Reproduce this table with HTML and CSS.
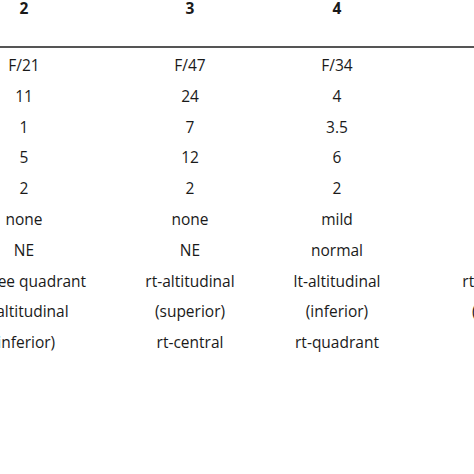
FILE: index.html
```html
<!DOCTYPE html>
<html>
<head>
<meta charset="utf-8">
<link rel="stylesheet" href="styles.css">
</head>
<body>
<table class="data">
  <colgroup>
    <col class="c1"><col class="c2"><col class="c3"><col class="c4">
  </colgroup>
  <thead>
    <tr><th>2</th><th>3</th><th>4</th><th>5</th></tr>
  </thead>
  <tbody>
    <tr class="first"><td>F/21</td><td>F/47</td><td>F/34</td><td>F/29</td></tr>
    <tr><td>11</td><td>24</td><td>4</td><td>9</td></tr>
    <tr><td>1</td><td>7</td><td>3.5</td><td>2</td></tr>
    <tr><td>5</td><td>12</td><td>6</td><td>4</td></tr>
    <tr><td>2</td><td>2</td><td>2</td><td>1</td></tr>
    <tr><td>none</td><td>none</td><td>mild</td><td>none</td></tr>
    <tr><td>NE</td><td>NE</td><td>normal</td><td>NE</td></tr>
    <tr><td>lt-three quadrant</td><td>rt-altitudinal</td><td>lt-altitudinal</td><td>rt-altitudinal</td></tr>
    <tr><td>rt-altitudinal</td><td>(superior)</td><td>(inferior)</td><td>(superior)</td></tr>
    <tr><td>(inferior)</td><td>rt-central</td><td>rt-quadrant</td><td></td></tr>
  </tbody>
</table>
</body>
</html>
```
FILE: styles.css
```css
html, body {
  margin: 0;
  padding: 0;
  background: #ffffff;
  overflow: hidden;
  width: 474px;
  height: 474px;
}
.data {
  border-collapse: collapse;
  table-layout: fixed;
  width: 672px;
  margin-left: -76px;
  font-family: "Open Sans", "Liberation Sans", sans-serif;
  font-size: 15.5px;
  color: #1a1a1a;
}
.c1 { width: 200px; }
.c2 { width: 132px; }
.c3 { width: 162px; }
.c4 { width: 178px; }
.data th {
  font-weight: 700;
  text-align: center;
  vertical-align: top;
  height: 47px;
  padding: 0;
  line-height: 16px;
  border-bottom: 2px solid #555555;
  box-sizing: border-box;
}
.data td {
  text-align: center;
  padding: 0;
  line-height: 30.8px;
  white-space: nowrap;
}
.data .first td {
  padding-top: 2px;
}
```
